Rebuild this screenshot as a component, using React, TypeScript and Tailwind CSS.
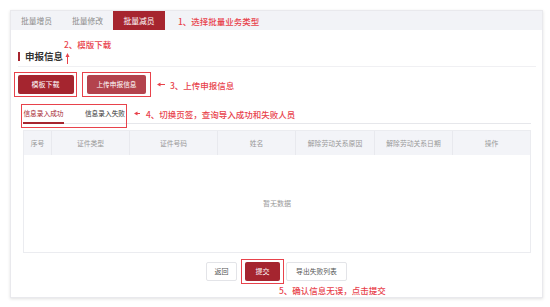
import React from "react";

const cols = [
  { w: "w-[27px]", t: "序号" },
  { w: "w-[78px]", t: "证件类型" },
  { w: "w-[88px]", t: "证件号码" },
  { w: "w-[78px]", t: "姓名" },
  { w: "w-[79px]", t: "解除劳动关系原因" },
  { w: "w-[78px]", t: "解除劳动关系日期" },
  { w: "w-[78px]", t: "操作" },
];

function LeftArrow({ w = 8 }: { w?: number }) {
  return (
    <svg width={w} height="5" viewBox={`0 0 ${w} 5`} className="shrink-0">
      <polygon points={`0,2.5 3.5,0.5 3.5,4.5`} fill="#e8424b" />
      <rect x="3" y="2" width={w - 3} height="1" fill="#e8424b" />
    </svg>
  );
}

export default function App() {
  return (
    <div className="w-[550px] h-[307px] bg-white pt-[10px] pl-[10px] font-['Noto_Sans_CJK_SC','Noto_Sans',sans-serif] overflow-hidden whitespace-nowrap">
      <div className="relative w-[533px] h-[288px] bg-white border border-[#e9e9ed] shadow-[0_1px_3px_rgba(0,0,0,0.12)]">
        {/* top tab bar */}
        <div className="h-[19px] bg-[#f2f3f7] flex items-center">
          <div className="w-[51px] h-full flex items-center justify-center text-[7.8px] text-[#8c8c8c]">批量增员</div>
          <div className="w-[51px] h-full flex items-center justify-center text-[7.8px] text-[#8c8c8c]">批量修改</div>
          <div className="w-[52px] h-full flex items-center justify-center text-[7.8px] text-white bg-[#a6252f]">批量减员</div>
          <div className="ml-[13px] text-[8.5px] leading-[10px] font-medium text-[#e8424b]">1、选择批量业务类型</div>
        </div>

        {/* title area */}
        <div className="relative h-[36px]">
          <div className="pt-[21px] pl-[7px] flex items-center gap-[5px]">
            <div className="w-[2px] h-[9px] bg-[#a6252f]" />
            <div className="text-[9.5px] leading-[10px] font-bold text-[#333]">申报信息</div>
          </div>
          <div className="absolute left-[53px] top-[9px] text-[8.5px] leading-[10px] font-medium text-[#e8424b]">2、模版下载</div>
          <svg className="absolute left-[54px] top-[23px]" width="5" height="11" viewBox="0 0 5 11">
            <polygon points="2.5,0 0.5,4 4.5,4" fill="#e8424b" />
            <rect x="2" y="3" width="1" height="8" fill="#e8424b" />
          </svg>
        </div>
        <div className="h-px bg-[#f0f0f3] ml-[7px] mr-[6px]" />

        {/* action buttons */}
        <div className="mt-[5px] flex items-center">
          <div className="ml-[3px] w-[63px] h-[25px] border border-[#e8424b] flex items-center justify-center">
            <div className="w-[56px] h-[19px] bg-[#a5252f] rounded-[2px] flex items-center justify-center text-[7px] text-white">模板下载</div>
          </div>
          <div className="ml-[5px] w-[69px] h-[25px] border border-[#e8424b] flex items-center justify-center">
            <div className="w-[59px] h-[19px] bg-[#b3434d] rounded-[2px] flex items-center justify-center text-[6.7px] text-white">上传申报信息</div>
          </div>
          <div className="ml-[6px]"><LeftArrow w={8} /></div>
          <div className="ml-[5px] text-[8.5px] leading-[10px] font-medium text-[#e8424b]">3、上传申报信息</div>
        </div>

        {/* sub tabs */}
        <div className="relative mt-[7px] ml-[12px] mr-[11px] h-[20px] border-b border-[#e6e7eb] flex items-stretch">
          <div className="w-[41px] flex items-center justify-center text-[6.7px] text-[#a6252f] border-b-2 border-[#a6252f] mb-[-1px]">信息录入成功</div>
          <div className="ml-[20px] w-[42px] flex items-center justify-center text-[6.7px] text-[#333]">信息录入失败</div>
          <div className="ml-[8px] self-center"><LeftArrow w={6} /></div>
          <div className="ml-[6px] self-center text-[8.5px] leading-[10px] font-medium text-[#e8424b]">4、切换页签，查询导入成功和失败人员</div>
          <div className="absolute left-[-2px] top-0 w-[106px] h-[24px] border border-[#e8424b] pointer-events-none" />
        </div>

        {/* table */}
        <div className="mt-[6px] ml-[12px] w-[508px] border border-[#ebecf0]">
          <div className="h-[24px] bg-[#f3f4f8] flex">
            {cols.map((c, i) => (
              <div
                key={i}
                className={`${c.w} h-full flex items-center justify-center text-[6.8px] text-[#999] ${i > 0 ? "border-l border-[#e8e9ee]" : ""}`}
              >
                {c.t}
              </div>
            ))}
          </div>
          <div className="h-[97px] flex items-center justify-center text-[7px] text-[#999]">暂无数据</div>
        </div>

        {/* bottom buttons */}
        <div className="mt-[6px] h-[25px] flex items-center justify-center">
          <div className="w-[31px] h-[19px] border border-[#e3e4e8] rounded-[2px] bg-white flex items-center justify-center text-[7px] text-[#555]">返回</div>
          <div className="ml-[4px] w-[43px] h-[25px] border border-[#e8424b] flex items-center justify-center">
            <div className="w-[35px] h-[19px] bg-[#a5252f] rounded-[2px] flex items-center justify-center text-[7px] text-white">提交</div>
          </div>
          <div className="ml-[2px] w-[61px] h-[19px] border border-[#e3e4e8] rounded-[2px] bg-white flex items-center justify-center text-[6.8px] text-[#555]">导出失败列表</div>
        </div>
        <div className="mt-[1px] pl-[268px] text-[8.5px] leading-[10px] font-medium text-[#e8424b]">5、确认信息无误，点击提交</div>
      </div>
    </div>
  );
}
